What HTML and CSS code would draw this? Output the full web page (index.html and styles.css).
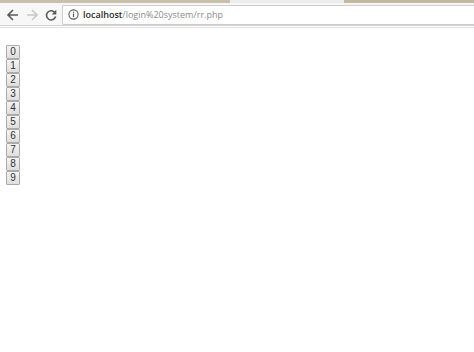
FILE: index.html
```html
<!DOCTYPE html>
<html>
<head>
<meta charset="utf-8">
<link rel="stylesheet" href="styles.css">
</head>
<body>
<div class="tabstrip">
  <div class="tab-a"></div>
  <div class="tab-b"></div>
  <div class="tab-c"></div>
</div>
<div class="toolbar">
  <div class="navs">
    <svg class="nav" width="14" height="14" viewBox="0 0 14 14"><path d="M12 7H2.5M7 2L2 7l5 5" fill="none" stroke="#5a5a5a" stroke-width="1.6"/></svg>
    <svg class="nav" width="14" height="14" viewBox="0 0 14 14"><path d="M2 7h9.5M7 2l5 5-5 5" fill="none" stroke="#c8c8c8" stroke-width="1.6"/></svg>
    <svg class="nav" width="14" height="14" viewBox="0 0 14 14"><path d="M11.2 5.2A4.6 4.6 0 1 0 11.6 8.4" fill="none" stroke="#5a5a5a" stroke-width="1.6"/><path d="M12.3 1.8v4.6H7.7z" fill="#5a5a5a"/></svg>
  </div>
  <div class="omnibox">
    <svg class="info" width="11" height="11" viewBox="0 0 11 11"><circle cx="5.5" cy="5.5" r="4.6" fill="none" stroke="#5a5a5a" stroke-width="1.1"/><rect x="4.9" y="4.6" width="1.2" height="3.6" fill="#5a5a5a"/><rect x="4.9" y="2.6" width="1.2" height="1.2" fill="#5a5a5a"/></svg>
    <span class="host">localhost</span><span class="path">/login%20system/rr.php</span>
  </div>
</div>
<div class="page">
  <div class="buttons">
    <button class="num">0</button>
    <button class="num">1</button>
    <button class="num">2</button>
    <button class="num">3</button>
    <button class="num">4</button>
    <button class="num">5</button>
    <button class="num">6</button>
    <button class="num">7</button>
    <button class="num">8</button>
    <button class="num">9</button>
  </div>
</div>
</body>
</html>
```
FILE: styles.css
```css
html, body {
  margin: 0;
  padding: 0;
  background: #ffffff;
  font-family: "Liberation Sans", Arial, sans-serif;
}
.tabstrip {
  display: flex;
  height: 3px;
}
.tab-a {
  width: 230px;
  background: #c9c0ab;
}
.tab-b {
  width: 114px;
  background: #ececec;
}
.tab-c {
  flex: 1;
  background: #c2b9a3;
}
.toolbar {
  display: flex;
  align-items: center;
  height: 21px;
  padding-top: 1px;
  background: #f7f7f7;
  border-bottom: 1px solid #d2d2d2;
}
.navs {
  display: flex;
  align-items: center;
  gap: 5px;
  padding-left: 6px;
  width: 56px;
}
.nav {
  display: block;
}
.omnibox {
  flex: 1;
  display: flex;
  align-items: center;
  height: 18px;
  margin-right: -6px;
  background: #ffffff;
  border: 1px solid #cdcdcd;
  border-right: none;
  border-radius: 2px 0 0 2px;
  font-family: "Open Sans", "Liberation Sans", sans-serif;
  font-size: 9px;
  padding-left: 5px;
}
.info {
  display: block;
  margin-right: 4px;
}
.host {
  color: #2a2a2a;
  font-weight: 600;
}
.path {
  color: #8a8a8a;
}
.page {
  border-top: 1px solid #e2e2e2;
  margin-top: 1px;
  padding: 17px 0 0 6px;
}
.buttons {
  display: flex;
  flex-direction: column;
  align-items: flex-start;
}
.num {
  width: 14px;
  height: 14px;
  padding: 0;
  margin: 0;
  font-family: "Liberation Sans", Arial, sans-serif;
  font-size: 10px;
  line-height: 12px;
  color: #333333;
  background: linear-gradient(#f4f4f4, #dedede);
  border: 1px solid #ababab;
  border-radius: 1px;
}
```
